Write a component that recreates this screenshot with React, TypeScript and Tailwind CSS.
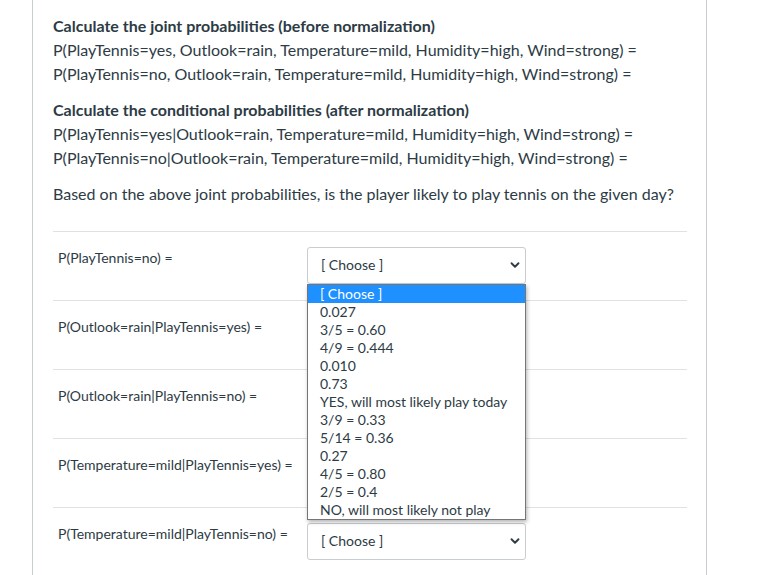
import { ChevronDown } from "lucide-react";

const rows = [
  "P(PlayTennis=no) =",
  "P(Outlook=rain|PlayTennis=yes) =",
  "P(Outlook=rain|PlayTennis=no) =",
  "P(Temperature=mild|PlayTennis=yes) =",
  "P(Temperature=mild|PlayTennis=no) =",
];

const options = [
  "[ Choose ]",
  "0.027",
  "3/5 = 0.60",
  "4/9 = 0.444",
  "0.010",
  "0.73",
  "YES, will most likely play today",
  "3/9 = 0.33",
  "5/14 = 0.36",
  "0.27",
  "4/5 = 0.80",
  "2/5 = 0.4",
  "NO, will most likely not play",
];

function FakeSelect({ open }: { open?: boolean }) {
  return (
    <div className="relative w-[219px]">
      <div className="flex h-[37px] items-center justify-between rounded-[3px] border border-[#c7cdd1] bg-white pb-[1px] pl-[13px] pr-[3px] text-[14px] text-[#2d3b45]">
        <span>[ Choose ]</span>
        <ChevronDown size={14} strokeWidth={3.2} className="text-[#2d3b45]" />
      </div>

      {/* lista abierta del primer desplegable */}
      {open && (
        <ul className="absolute left-0 top-[37px] z-10 w-[219px] border border-[#767676] bg-white shadow-[1px_2px_4px_rgba(0,0,0,0.3)]">
          {options.map((o, i) => (
            <li
              key={o}
              className={
                "h-[18px] pl-[12px] text-[14px] leading-[18px] " +
                (i === 0 ? "bg-[#1e90ff] text-white" : "text-[#2d3b45]")
              }
            >
              {o}
            </li>
          ))}
        </ul>
      )}
    </div>
  );
}

export default function App() {
  return (
    <div
      className="min-h-[575px] bg-white pl-[32px]"
      style={{ fontFamily: "Lato, 'Open Sans', sans-serif" }}
    >
      <div className="min-h-[575px] w-[675px] border-x border-[#c7cdd1] pl-[20px] pr-[19px] pt-[14px] text-[16px] leading-6 text-[#2d3b45]">
        <p className="font-bold">Calculate the joint probabilities (before normalization)</p>
        <p>P(PlayTennis=yes, Outlook=rain, Temperature=mild, Humidity=high, Wind=strong) =</p>
        <p>P(PlayTennis=no, Outlook=rain, Temperature=mild, Humidity=high, Wind=strong) =</p>

        <p className="mt-3 font-bold">Calculate the conditional probabilities (after normalization)</p>
        <p>P(PlayTennis=yes|Outlook=rain, Temperature=mild, Humidity=high, Wind=strong) =</p>
        <p>P(PlayTennis=no|Outlook=rain, Temperature=mild, Humidity=high, Wind=strong) =</p>

        <p className="mt-3">Based on the above joint probabilities, is the player likely to play tennis on the given day?</p>

        <div className="mt-[25px]">
          {rows.map((r, i) => (
            <div
              key={r}
              className="flex h-[69px] border-t border-[#dfe2e4] pl-[5px] pt-[15px]"
            >
              <div className="w-[249px] pt-[1px] text-[14px] leading-5">{r}</div>
              <FakeSelect open={i === 0} />
            </div>
          ))}
        </div>
      </div>
    </div>
  );
}
